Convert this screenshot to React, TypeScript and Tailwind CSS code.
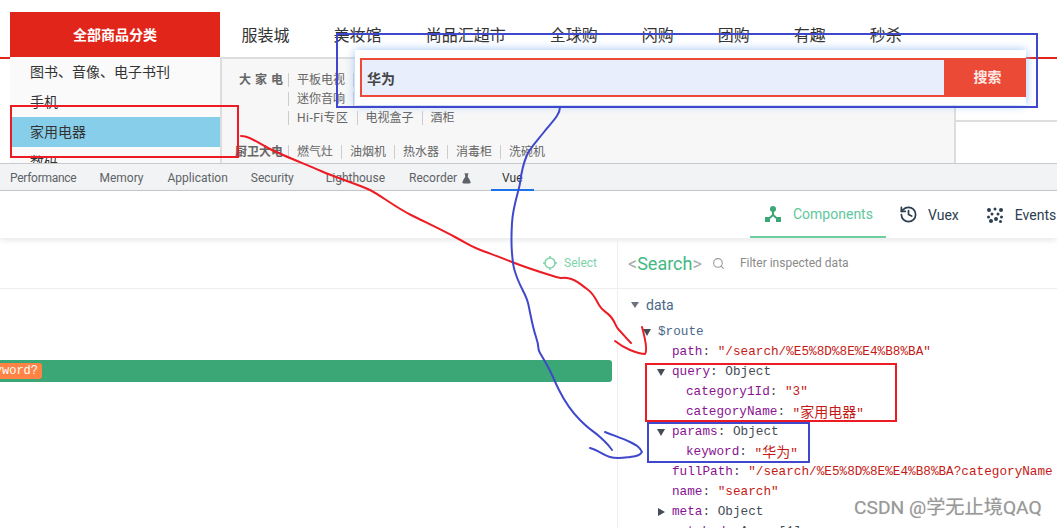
import React from "react";
import { History, Search, FlaskConical } from "lucide-react";

const navItems = ["服装城", "美妆馆", "尚品汇超市", "全球购", "闪购", "团购", "有趣", "秒杀"];
const categories = ["图书、音像、电子书刊", "手机", "家用电器", "数码"];
const mono = "font-['Liberation_Mono',monospace]";

function PanelRow({ items }: { items: string[] }) {
  return (
    <div className="flex h-[19px] items-center">
      {items.map((t, i) => (
        <span
          key={i}
          className={`h-[14px] border-l border-[#cccccc] px-[8px] text-[12px] leading-[14px] text-[#666666] whitespace-nowrap ${t.startsWith("Hi") ? "tracking-[0.45px]" : ""}`}
        >
          {t}
        </span>
      ))}
    </div>
  );
}

function Code({ pad, arrow, k, v, dark }: { pad: string; arrow?: "down" | "right"; k: string; v: React.ReactNode; dark?: boolean }) {
  return (
    <div className={`relative flex h-[20px] items-center whitespace-pre ${pad}`}>
      {arrow === "down" && <span className="mr-[7px] ml-[-15px] h-0 w-0 border-x-[4px] border-t-[7px] border-x-transparent border-t-[#444c56]" />}
      {arrow === "right" && <span className="mr-[7px] ml-[-14px] h-0 w-0 border-y-[4px] border-l-[7px] border-y-transparent border-l-[#444c56]" />}
      <span className="text-[#881391]">{k}</span>
      <span className="text-[#444c56]">: </span>
      <span className={dark ? "text-[#444c56]" : "text-[#c41a16]"}>{v}</span>
    </div>
  );
}

function Cjk({ children }: { children: React.ReactNode }) {
  return <span className="font-['Noto_Sans_CJK_SC',sans-serif] text-[14px]">{children}</span>;
}

export default function App() {
  return (
    <div className="relative h-[528px] w-[1057px] overflow-hidden bg-white font-['Roboto','Noto_Sans_CJK_SC',sans-serif]">
      {/* Shop page */}
      <div className="h-[163px] overflow-hidden">
        <div className="flex h-[57px] items-end pl-[10px]">
          <div className="flex h-[45px] w-[210px] items-center justify-center bg-[#e1251b] pt-[2px] text-[14px] font-bold text-white">全部商品分类</div>
          <div className="ml-[21px] flex h-[45px] items-center gap-[44px] pt-[2px] pl-[0.6px] text-[16px] text-[#333333]">
            {navItems.map((n) => (
              <span key={n} className="whitespace-nowrap">{n}</span>
            ))}
          </div>
        </div>
        <div className="flex h-[106px]">
          <div className="w-[10px] border-t-2 border-[#e1251b]" />
          <div className="w-[210px] bg-[#fafafa]">
            {categories.map((c) => (
              <div key={c} className={`flex h-[30px] items-center pl-[20px] text-[14px] text-[#333333] ${c === "家用电器" ? "bg-[#87ceeb]" : ""}`}>{c}</div>
            ))}
          </div>
          <div className="w-[736px] border-x-2 border-t-2 border-[#dddddd] bg-[#f7f7f7] pt-[11px]">
            <div className="flex">
              <div className="flex h-[19px] w-[66px] items-center justify-end pr-[1px] text-[12px] font-bold tracking-[4px] text-[#666666]">大家电</div>
              <div>
                <PanelRow items={["平板电视", ""]} />
                <PanelRow items={["迷你音响", ""]} />
                <PanelRow items={["Hi-Fi专区", "电视盒子", "酒柜"]} />
              </div>
            </div>
            <div className="mt-[15px] flex">
              <div className="flex h-[19px] w-[66px] items-center justify-end pr-[5px] text-[12px] font-bold text-[#666666]">厨卫大电</div>
              <PanelRow items={["燃气灶", "油烟机", "热水器", "消毒柜", "洗碗机"]} />
            </div>
          </div>
          <div className="flex-1 border-t-2 border-[#e1251b]">
            <div className="mt-[61px] h-[2px] bg-[#dddddd]" />
          </div>
        </div>
      </div>

      {/* DevTools tab strip */}
      <div className="flex h-[28px] items-end border-y border-[#c8cacd] bg-[#f1f3f4] pl-[10px] text-[12px] text-[#5f6368]">
        <div className="flex h-[26px] items-center pt-[2px]">
          <span className="tracking-[-0.27px]">Performance</span>
          <span className="ml-[23px]">Memory</span>
          <span className="ml-[24px]">Application</span>
          <span className="ml-[23px]">Security</span>
          <span className="ml-[32px]">Lighthouse</span>
          <span className="ml-[24px]">Recorder</span>
          <FlaskConical className="ml-[4px] h-[11px] w-[11px] fill-[#5f6368]" strokeWidth={2} />
          <span className="ml-[19px] flex h-[26px] items-center border-b-2 border-[#1a73e8] px-[11px] pt-[1px] text-[#333333]">Vue</span>
        </div>
      </div>

      {/* Vue devtools header */}
      <div className="flex h-[47px] justify-end bg-white shadow-[0_2px_6px_rgba(0,0,0,0.1)]">
        <div className="flex w-[307px] shrink-0 items-center text-[14px]">
          <div className="flex h-[47px] w-[136px] items-center gap-[12px] border-b-2 border-[#6fcf9f] pl-[15px] text-[#5ec79b]">
            <svg viewBox="0 0 16 16" className="h-[16px] w-[16px]" fill="#3ba776">
              <circle cx="8" cy="3" r="3" />
              <rect x="0" y="11" width="5" height="5" />
              <rect x="11" y="11" width="5" height="5" />
              <path d="M7 5h2v3.4l4.2 3.8-1.3 1.5L8 10.2 4.1 13.7l-1.3-1.5L7 8.4z" />
            </svg>
            <span className="mt-[2px]">Components</span>
          </div>
          <History className="ml-[13px] h-[19px] w-[19px] text-[#2c3e50]" strokeWidth={2.2} />
          <span className="ml-[10px] mt-[2px] text-[#2c3e50]">Vuex</span>
          <svg viewBox="0 0 16 16" className="ml-[28px] h-[16px] w-[16px] shrink-0" fill="#2c3e50">
            <circle cx="2" cy="3" r="2" /><circle cx="8" cy="2" r="1.5" /><circle cx="14" cy="3" r="2" />
            <circle cx="5" cy="7" r="1.5" /><circle cx="11" cy="7" r="1.5" />
            <circle cx="1.5" cy="10" r="1.5" /><circle cx="14.5" cy="10" r="1.5" />
            <circle cx="4" cy="14" r="2" /><circle cx="9" cy="12" r="2" /><circle cx="13.5" cy="14.5" r="1.5" />
          </svg>
          <span className="ml-[12px] mt-[2px] whitespace-nowrap text-[#2c3e50]">Events</span>
        </div>
      </div>

      {/* Split panes */}
      <div className="flex h-[290px]">
        <div className="w-[618px] shrink-0 border-r border-[#eeeeee]">
          <div className="flex h-[51px] items-center justify-end gap-[7px] border-b border-[#eeeeee] pr-[20px] text-[12px] text-[#7dd3a8]">
            <svg viewBox="0 0 14 14" className="h-[14px] w-[14px]" fill="none" stroke="#7dd3a8" strokeWidth="1.5">
              <circle cx="7" cy="7" r="5" />
              <path d="M7 0v2M7 12v2M0 7h2M12 7h2" />
            </svg>
            <span>Select</span>
          </div>
          <div className="mt-[71px] flex h-[22px] w-[612px] items-center rounded-r-[3px] bg-[#3ba776]">
            <div className={`flex h-[16px] w-[42px] items-center justify-end overflow-hidden rounded-r-[3px] bg-[#ff8344] pr-[4px] text-[12px] text-white ${mono}`}>
              <span className="whitespace-nowrap">yword?</span>
            </div>
          </div>
        </div>

        <div className="min-w-0 flex-1">
          <div className="flex h-[51px] items-center border-b border-[#eeeeee] pl-[10px]">
            <span className="text-[18px] text-[#aaaaaa]">&lt;<span className="text-[#42b983]">Search</span>&gt;</span>
            <Search className="ml-[10px] h-[13px] w-[13px] text-[#999999]" strokeWidth={2} />
            <span className="ml-[15px] text-[12px] text-[#8a8a8a]">Filter inspected data</span>
          </div>
          <div className="flex h-[32px] items-center pl-[13px] text-[14px] text-[#486887]">
            <span className="mr-[7px] h-0 w-0 border-x-[4px] border-t-[6px] border-x-transparent border-t-[#6b7280]" />
            data
          </div>
          <div className={`mt-[1px] text-[12.7px] ${mono}`}>
            <div className="flex h-[20px] items-center whitespace-pre pl-[25px]">
              <span className="mr-[7px] h-0 w-0 border-x-[4px] border-t-[7px] border-x-transparent border-t-[#444c56]" />
              <span className="text-[#486887]">$route</span>
            </div>
            <Code pad="pl-[54px]" k="path" v={'"/search/%E5%8D%8E%E4%B8%BA"'} />
            <Code pad="pl-[54px]" arrow="down" k="query" v="Object" dark />
            <Code pad="pl-[68px]" k="category1Id" v={'"3"'} />
            <Code pad="pl-[68px]" k="categoryName" v={<>"<Cjk>家用电器</Cjk>"</>} />
            <Code pad="pl-[54px]" arrow="down" k="params" v="Object" dark />
            <Code pad="pl-[68px]" k="keyword" v={<>"<Cjk>华为</Cjk>"</>} />
            <Code pad="pl-[54px]" k="fullPath" v={'"/search/%E5%8D%8E%E4%B8%BA?categoryName'} />
            <Code pad="pl-[54px]" k="name" v={'"search"'} />
            <Code pad="pl-[54px]" arrow="right" k="meta" v="Object" dark />
            <Code pad="pl-[54px]" arrow="right" k="matched" v="Array[1]" dark />
          </div>
        </div>
      </div>

      {/* Search box floating over the shop page */}
      <div className="absolute left-[355px] top-[50px] flex h-[55px] w-[671px] items-center bg-white pl-[5px] shadow-[0_0_9px_#9cc4f5]">
        <div className="flex h-[39px] w-[586px] shrink-0 items-center border-2 border-[#ea4a36] bg-[#e8eefb] pl-[5px] pt-[3px] text-[14px] font-bold text-[#444444]">华为</div>
        <div className="flex h-[39px] w-[80px] shrink-0 items-center justify-center bg-[#ea4a36] pl-[3px] text-[14px] font-bold text-[#ffe9e6]">搜索</div>
      </div>

      {/* Annotations drawn on top of the screenshot */}
      <div className="absolute left-[10px] top-[105px] h-[53px] w-[229px] border-2 border-[#ed1c24]" />
      <div className="absolute left-[336px] top-[33px] h-[75px] w-[702px] border-2 border-[#3f48cc]" />
      <div className="absolute left-[645px] top-[363px] h-[59px] w-[252px] border-2 border-[#ed1c24]" />
      <div className="absolute left-[647px] top-[422px] h-[41px] w-[163px] border-2 border-[#3f48cc]" />
      <svg className="absolute left-0 top-0 h-[528px] w-[1057px]" viewBox="0 0 1057 528" fill="none" strokeWidth="2" strokeLinecap="round" strokeLinejoin="round">
        <path stroke="#ed1c24" d="M241 136C250 136 256 142 270 149S305 164 321 171 360 185 370 190 395 207 411 215 440 229 455 237 468 245 478 249 497 256 512 262 540 272 553 276 558 277 567 278 580 284 587 289 595 298 599 305 606 311 611 317 615 326 619 330 625 337 631 343" />
        <path stroke="#ed1c24" d="M615 341C620 345 625 348 630 350S640 354 645 354C648 350 645 338 642 327" />
        <path stroke="#3f48cc" d="M560 107C560 115 552 122 544 132S530 148 527 155 521 175 520 183 513 205 512 223 511 240 512 253 514 270 518 280 526 295 528 303 532 325 536 337 537 348 540 353 549 368 553 377 556 384 559 390 568 408 580 420 590 428 600 437 608 445 612 450" />
        <path stroke="#3f48cc" d="M590 448C598 450 603 455 610 457S622 458 630 457 640 455 642 452C640 447 636 445 630 442S615 436 605 432" />
      </svg>

      {/* Watermark */}
      <div className="absolute left-[854px] top-[497px] whitespace-nowrap text-[19.2px] leading-[22px] text-[#999999] [text-shadow:0_0_1px_#cccccc]">CSDN @学无止境QAQ</div>
    </div>
  );
}
